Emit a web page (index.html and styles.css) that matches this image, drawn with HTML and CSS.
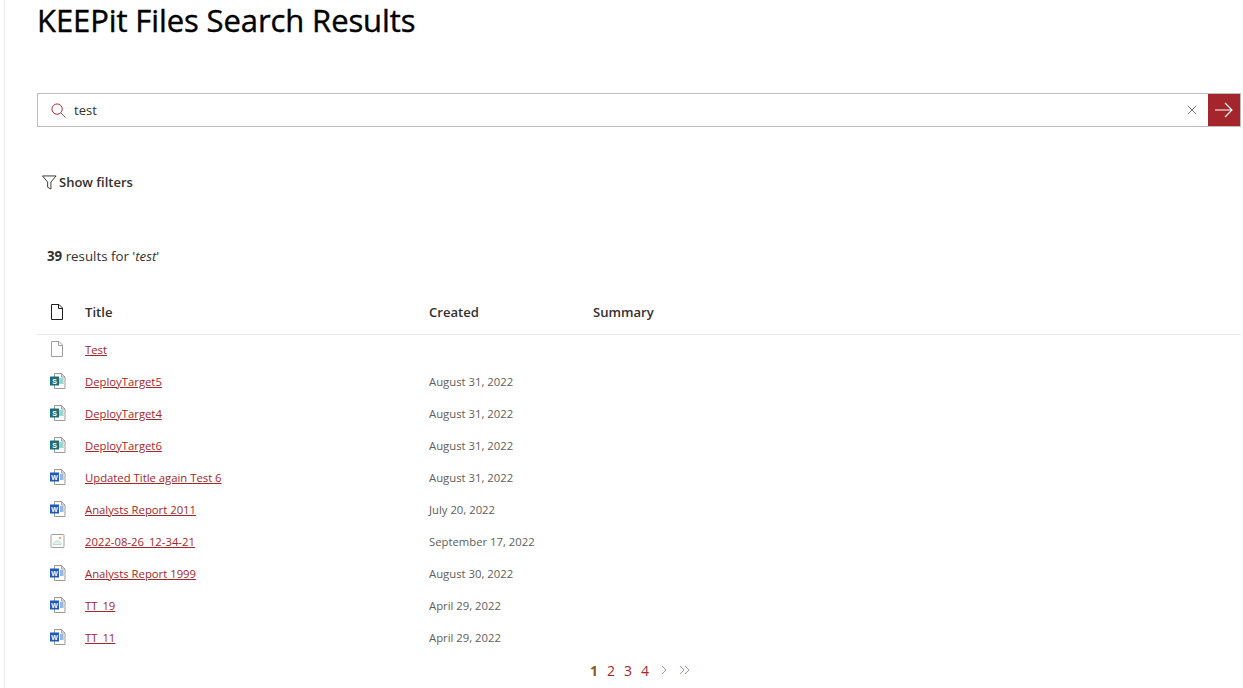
FILE: index.html
```html
<!DOCTYPE html>
<html lang="en">
<head>
<meta charset="utf-8">
<title>KEEPit Files Search Results</title>
<link rel="stylesheet" href="styles.css">
</head>
<body>
<svg class="defs" width="0" height="0" aria-hidden="true">
  <defs>
    <symbol id="sheet" viewBox="0 0 16 16">
      <path d="M4.500 .5h7l3.500 3.500v11.500h-10.500z" fill="#fff" stroke="#9a9a9a"/>
      <path d="M11.500 .5v3.500h3.500" fill="none" stroke="#9a9a9a"/>
    </symbol>
    <symbol id="sp" viewBox="0 0 16 16">
      <use href="#sheet"/>
      <rect x="7" y="5" width="6.500" height="6" fill="#9ad6cc"/>
      <rect x="0" y="3.500" width="9" height="9" fill="#1b7078"/>
      <text x="4.500" y="11" class="badge">S</text>
    </symbol>
    <symbol id="word" viewBox="0 0 16 16">
      <use href="#sheet"/>
      <path d="M10 6h3.500M10 8h3.500M10 10h3.500" stroke="#2b6fc4" fill="none"/>
      <rect x="0" y="3.500" width="9" height="9" fill="#1f5bb5"/>
      <text x="4.500" y="11" class="badge">W</text>
    </symbol>
  </defs>
</svg>
<main class="page">
  <h1 class="title">KEEPit Files Search Results</h1>

  <div class="search">
    <svg class="search-icon" viewBox="0 0 16 16" width="15" height="15"><circle cx="6.500" cy="6.500" r="5.500" fill="none" stroke="#a4262c"/><path d="M10.500 10.500l5 5" stroke="#605e5c" fill="none"/></svg>
    <span class="query">test</span>
    <svg class="clear" viewBox="0 0 10 10" width="10" height="10"><path d="M1 1l8 8M9 1l-8 8" stroke="#7a7a7a" fill="none"/></svg>
    <span class="go"><svg viewBox="0 0 18 16" width="18" height="16"><path d="M0 8h17M10 1l7 7-7 7" stroke="#fff" fill="none" stroke-width="1.100"/></svg></span>
  </div>

  <div class="filters">
    <svg viewBox="0 0 16 16" width="15" height="15"><path d="M.5 1h14.500l-5.500 6.500v7.500l-3.500-2v-5.500z" fill="none" stroke="#323130"/></svg>
    <span>Show filters</span>
  </div>

  <p class="count"><b>39</b> results for '<i>test</i>'</p>

  <div class="row head">
    <svg class="ficon" viewBox="1 0 16 16" width="16" height="16"><path d="M2.500 .5h7.500l3.500 3.500v11.500h-11z" fill="#fff" stroke="#201f1e"/><path d="M9.500 .5v4h4" fill="none" stroke="#201f1e"/></svg>
    <span>Title</span><span>Created</span><span>Summary</span>
  </div>

  <div class="row item first"><svg class="ficon" viewBox="1 0 16 16" width="16" height="16"><path d="M2.500 .5h7.500l3.500 3.500v11.500h-11z" fill="#fff" stroke="#a19f9d"/><path d="M9.500 .5v4h4" fill="none" stroke="#a19f9d"/></svg><a href="#">Test</a><span></span></div>
  <div class="row item"><svg class="ficon" width="16" height="16"><use href="#sp"/></svg><a href="#">DeployTarget5</a><span>August 31, 2022</span></div>
  <div class="row item"><svg class="ficon" width="16" height="16"><use href="#sp"/></svg><a href="#">DeployTarget4</a><span>August 31, 2022</span></div>
  <div class="row item"><svg class="ficon" width="16" height="16"><use href="#sp"/></svg><a href="#">DeployTarget6</a><span>August 31, 2022</span></div>
  <div class="row item"><svg class="ficon" width="16" height="16"><use href="#word"/></svg><a href="#">Updated Title again Test 6</a><span>August 31, 2022</span></div>
  <div class="row item"><svg class="ficon" width="16" height="16"><use href="#word"/></svg><a href="#">Analysts Report 2011</a><span>July 20, 2022</span></div>
  <div class="row item"><svg class="ficon" viewBox="1.500 0 16 16" width="16" height="16"><rect x="2.500" y="1.500" width="13" height="13" rx="1" fill="#fff" stroke="#a19f9d"/><path d="M4.500 11.500c0-2 2-2.500 3-3 1-1.500 3-1 3.500.500 1.500 0 2 1.500 1.500 2.500z" fill="#e3f1ee" stroke="#9ccfc4" stroke-width=".7"/><circle cx="11.500" cy="5" r="1.200" fill="#f0a868"/></svg><a href="#">2022-08-26_12-34-21</a><span>September 17, 2022</span></div>
  <div class="row item"><svg class="ficon" width="16" height="16"><use href="#word"/></svg><a href="#">Analysts Report 1999</a><span>August 30, 2022</span></div>
  <div class="row item"><svg class="ficon" width="16" height="16"><use href="#word"/></svg><a href="#">TT_19</a><span>April 29, 2022</span></div>
  <div class="row item"><svg class="ficon" width="16" height="16"><use href="#word"/></svg><a href="#">TT_11</a><span>April 29, 2022</span></div>

  <nav class="pager">
    <b>1</b><a href="#">2</a><a href="#">3</a><a href="#">4</a>
    <svg class="arrow" viewBox="0 0 8 10" width="8" height="10"><path d="M2 1l4 4-4 4" fill="none" stroke="#c98a8d"/></svg>
    <svg class="arrow" viewBox="0 0 11 10" width="11" height="10"><path d="M1 1l4 4-4 4M6 1l4 4-4 4" fill="none" stroke="#c98a8d"/></svg>
  </nav>
</main>
</body>
</html>
```

FILE: styles.css
```css
* { box-sizing: border-box; }
html, body { margin: 0; height: 688px; overflow: hidden; background: #fff; }
body { font-family: "Open Sans", "Noto Sans", "Liberation Sans", sans-serif; color: #323130; }
.defs { display: block; height: 0; }
.badge { font: 700 7px "Liberation Sans", sans-serif; fill: #fff; text-anchor: middle; }
.page { margin-left: 4px; width: 1239px; height: 688px; padding: 0 2px 0 32px; border-left: 1px solid #edebe9; }
.title { margin: 0; height: 93px; font-size: 31px; line-height: 40px; font-weight: 500; color: #000; letter-spacing: -.1px; -webkit-text-stroke: .4px #000; }
.search { display: flex; align-items: center; height: 34px; border: 1px solid #bdbdbd; padding-left: 13px; }
.search-icon { flex: none; }
.query { margin-left: 8px; flex: 1; font-size: 13px; }
.clear { flex: none; margin-right: 11px; }
.go { flex: none; width: 32px; height: 32px; background: #a4262c; display: flex; align-items: center; justify-content: center; }
.filters { display: flex; align-items: center; gap: 2px; margin: 45px 0 0 5px; height: 20px; font-size: 13px; font-weight: 600; }
.count { margin: 54px 0 0 10px; height: 20px; font-size: 13.300px; line-height: 20px; }
.count b { font-weight: 700; }
.row { display: grid; grid-template-columns: 48px 344px 164px 1fr; align-items: center; }
.ficon { margin-left: 13px; }
.head { margin-top: 26px; height: 43px; padding-bottom: 3px; border-bottom: 1px solid #edebe9; font-size: 13.100px; font-weight: 600; }
.item { height: 32px; font-size: 11.300px; color: #605e5c; }
.item.first { height: 30px; padding-bottom: 2px; }
.item a { color: #a4262c; }
.pager { display: flex; align-items: center; justify-content: center; gap: 9px; height: 32px; margin-top: 1px; font-size: 14px; padding-left: 2px; }
.pager a { color: #a4262c; text-decoration: none; }
.pager b { color: #8a5a1e; font-weight: 700; }
.arrow { margin-left: 2px; }
```
